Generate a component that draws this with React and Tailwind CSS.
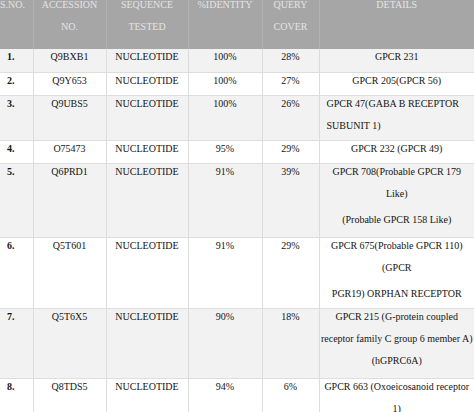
const rows = [
  { n: "1.", acc: "Q9BXB1", id: "100%", cover: "28%", details: ["GPCR 231"], h: "h-[23px]" },
  { n: "2.", acc: "Q9Y653", id: "100%", cover: "27%", details: ["GPCR 205(GPCR 56)"], h: "h-[23px]" },
  {
    n: "3.",
    acc: "Q9UBS5",
    id: "100%",
    cover: "26%",
    details: ["GPCR 47(GABA B RECEPTOR", "SUBUNIT 1)"],
    left: true,
    h: "h-[45px]",
  },
  { n: "4.", acc: "O75473", id: "95%", cover: "29%", details: ["GPCR 232 (GPCR 49)"], h: "h-[23px]" },
  {
    n: "5.",
    acc: "Q6PRD1",
    id: "91%",
    cover: "39%",
    details: ["GPCR 708(Probable GPCR 179", "Like)"],
    extra: "(Probable GPCR 158 Like)",
    h: "h-[74px]",
  },
  {
    n: "6.",
    acc: "Q5T601",
    id: "91%",
    cover: "29%",
    details: ["GPCR 675(Probable GPCR 110)", "(GPCR"],
    extra: "PGR19) ORPHAN RECEPTOR",
    h: "h-[71px]",
  },
  {
    n: "7.",
    acc: "Q5T6X5",
    id: "90%",
    cover: "18%",
    details: [
      "GPCR 215 (G-protein coupled",
      "receptor family C group 6 member A)",
      "(hGPRC6A)",
    ],
    h: "h-[70px]",
  },
  {
    n: "8.",
    acc: "Q8TDS5",
    id: "94%",
    cover: "6%",
    details: ["GPCR 663 (Oxoeicosanoid receptor", "1)"],
    h: "h-[40px]",
  },
];

const serif = "font-['Liberation_Serif','Times_New_Roman',serif] text-[10px]";

function HeadCell({ lines, className = "" }) {
  return (
    <th className={`${serif} border-r border-[#b3b3b3] align-top font-normal p-0 ${className}`}>
      <div className="-mt-[3px] flex flex-col gap-[6px]">
        {lines.map((l) => (
          <span key={l} className="leading-[16px] whitespace-nowrap">
            {l}
          </span>
        ))}
      </div>
    </th>
  );
}

function Cell({ children, className = "" }) {
  return (
    <td className={`${serif} align-top p-0 border-r border-[#dcdcdc] leading-[16px] ${className}`}>
      {children}
    </td>
  );
}

export default function App() {
  return (
    <div className={`w-[474px] h-[412px] overflow-hidden bg-white text-[#141414] ${serif}`}>
      <table className={`table-fixed border-collapse w-[474px] ${serif}`}>
        <colgroup>
          <col className="w-[33px]" />
          <col className="w-[73px]" />
          <col className="w-[82px]" />
          <col className="w-[74px]" />
          <col className="w-[57px]" />
          <col className="w-[155px]" />
        </colgroup>
        <thead>
          <tr className="h-[49px] bg-[#a6a6a6] text-[#e4e4e4]">
            <HeadCell lines={["S.NO."]} className="text-left" />
            <HeadCell lines={["ACCESSION", "NO."]} className="text-center" />
            <HeadCell lines={["SEQUENCE", "TESTED"]} className="text-center" />
            <HeadCell lines={["%IDENTITY"]} className="text-center" />
            <HeadCell lines={["QUERY", "COVER"]} className="text-center" />
            <HeadCell lines={["DETAILS"]} className="text-center border-r-0" />
          </tr>
        </thead>
        <tbody>
          {rows.map((r, i) => (
            <tr
              key={r.n}
              className={`${r.h} border-b border-[#dedede] ${i % 2 === 0 ? "bg-[#f2f2f2]" : "bg-white"}`}
            >
              <Cell className="pl-[7px] font-bold">{r.n}</Cell>
              <Cell className="text-center">{r.acc}</Cell>
              <Cell className="text-center">NUCLEOTIDE</Cell>
              <Cell className="text-center">{r.id}</Cell>
              <Cell className="text-center">{r.cover}</Cell>
              <Cell className={`border-r-0 ${r.left ? "text-left pl-[7px]" : "text-center"}`}>
                <div className="flex flex-col gap-[6px]">
                  {r.details.map((d) => (
                    <span key={d} className="leading-[16px] whitespace-nowrap">
                      {d}
                    </span>
                  ))}
                  {r.extra && (
                    <span className="leading-[16px] whitespace-nowrap mt-[4px]">{r.extra}</span>
                  )}
                </div>
              </Cell>
            </tr>
          ))}
        </tbody>
      </table>
    </div>
  );
}
